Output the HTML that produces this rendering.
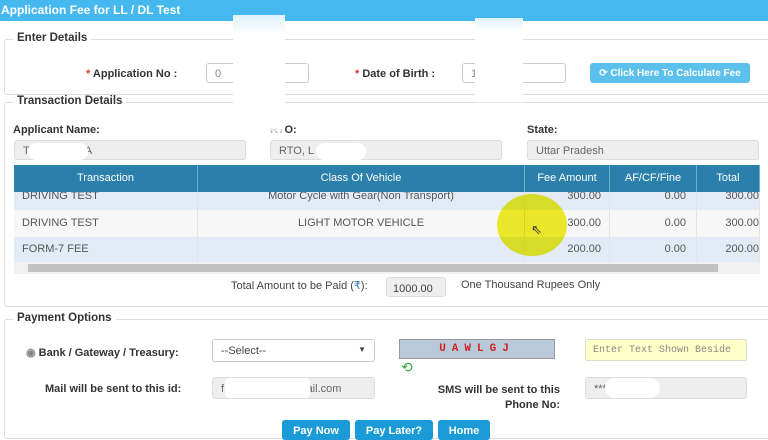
<!DOCTYPE html>
<html><head><meta charset="utf-8"><style>
*{margin:0;padding:0;box-sizing:border-box}
body{width:768px;height:432px;overflow:hidden;background:#fff;font-family:"Liberation Sans",sans-serif;font-size:11px;color:#333;position:relative}
.a{position:absolute}
.hdr{left:0;top:0;width:768px;height:21px;background:#45b8f0;color:#fff;font-weight:bold;font-size:12px;padding:3px 0 0 1px}
.fs{border:1px solid #ddd;border-radius:3px}
.lg{background:#fff;font-weight:bold;font-size:11.5px;color:#333;padding:0 4px}
.inp{border:1px solid #ccc;border-radius:3px;background:#fff;color:#888;padding:4px 8px}
.ro{background:#eee;border:1px solid #ddd;border-radius:3px;color:#666;padding:4px 8px}
.lb{font-weight:bold;font-size:11px}
.red{color:#d33}
.btn{background:#1a9ad6;color:#fff;font-weight:bold;font-size:11px;border-radius:3px;text-align:center;padding-top:5px}
.blur{background:#fff;border-radius:4px}
.row{position:absolute;left:14px;width:746px;overflow:hidden}
.c{position:absolute;top:0;height:100%;border-right:1px solid #e4e4e4;color:#555;font-size:11px;overflow:hidden;white-space:nowrap}
.h .c{color:#fff;border-right:1px solid #6fb0cf;text-align:center;line-height:27px}
.c1{left:0;width:184px;padding-left:8px}
.c2{left:184px;width:327px;text-align:center}
.c3{left:511px;width:85px;text-align:right;padding-right:8px}
.c4{left:596px;width:87px;text-align:right;padding-right:10px}
.c5{left:683px;width:63px;text-align:right;padding-right:0}
</style></head><body>
<div class="a hdr">Application Fee for LL / DL Test</div>

<div class="a fs" style="left:4px;top:39px;width:770px;height:56px"></div>
<div class="a lg" style="left:13px;top:32px">Enter Details</div>
<div class="a lb" style="left:86px;top:68px"><span class="red">*</span> Application No :</div>
<div class="a inp" style="left:206px;top:63px;width:103px;height:20px">0</div>
<div class="a lb" style="left:355px;top:68px"><span class="red">*</span> Date of Birth :</div>
<div class="a inp" style="left:462px;top:63px;width:104px;height:20px">1&nbsp;&nbsp;&nbsp;&nbsp;&nbsp;&nbsp;&nbsp;&nbsp;96.</div>
<div class="a btn" style="left:590px;top:63px;width:160px;height:20px;background:#5bc0eb;font-size:10px">⟳ Click Here To Calculate Fee</div>

<div class="a fs" style="left:4px;top:102px;width:770px;height:205px"></div>
<div class="a lg" style="left:13px;top:95px">Transaction Details</div>
<div class="a lb" style="left:13px;top:124px">Applicant Name:</div>
<div class="a ro" style="left:14px;top:140px;width:232px;height:20px">T/&nbsp;&nbsp;&nbsp;&nbsp;&nbsp;&nbsp;&nbsp;&nbsp;&nbsp;&nbsp;&nbsp;&nbsp;&nbsp;&nbsp;&nbsp;&nbsp;&nbsp;A</div>
<div class="a lb" style="left:270px;top:124px">RTO:</div>
<div class="a ro" style="left:270px;top:140px;width:232px;height:20px">RTO, L&nbsp;&nbsp;&nbsp;&nbsp;&nbsp;&nbsp;&nbsp;&nbsp;&nbsp;&nbsp;&nbsp;&nbsp;&nbsp;W</div>
<div class="a lb" style="left:527px;top:124px">State:</div>
<div class="a ro" style="left:527px;top:140px;width:232px;height:20px">Uttar Pradesh</div>

<div class="row" style="top:192px;height:18px;background:#e3ecf6;line-height:8px"><div class="c c1">DRIVING TEST</div><div class="c c2">Motor Cycle with Gear(Non Transport)</div><div class="c c3">300.00</div><div class="c c4">0.00</div><div class="c c5">300.00</div></div>
<div class="row" style="top:210px;height:27px;background:#f7f7f7;line-height:27px"><div class="c c1">DRIVING TEST</div><div class="c c2">LIGHT MOTOR VEHICLE</div><div class="c c3">300.00</div><div class="c c4">0.00</div><div class="c c5">300.00</div></div>
<div class="row" style="top:237px;height:25px;background:#e3ecf6;line-height:25px"><div class="c c1">FORM-7 FEE</div><div class="c c2"></div><div class="c c3">200.00</div><div class="c c4">0.00</div><div class="c c5">200.00</div></div>
<div class="a" style="left:497px;top:194px;width:70px;height:62px;border-radius:50%;background:#f2ee2a;mix-blend-mode:multiply"></div>
<div class="a" style="left:531px;top:222px;font-size:13px;color:#333">⇖</div>
<div class="row h" style="top:165px;height:27px;background:#2a7fab"><div class="c c1" style="padding:0">Transaction</div><div class="c c2">Class Of Vehicle</div><div class="c c3" style="padding:0">Fee Amount</div><div class="c c4" style="padding:0">AF/CF/Fine</div><div class="c c5">Total</div></div>
<div class="a" style="left:14px;top:262px;width:746px;height:12px;background:#f0f0f0"></div>
<div class="a" style="left:28px;top:264px;width:690px;height:8px;background:#c1c1c1"></div>

<div class="a" style="left:231px;top:279px;color:#444">Total Amount to be Paid (<span style="color:#27a">₹</span>):</div>
<div class="a ro" style="left:386px;top:277px;width:60px;height:20px;color:#444;padding:5px 6px">1000.00</div>
<div class="a" style="left:461px;top:279px;color:#444">One Thousand Rupees Only</div>

<div class="a fs" style="left:4px;top:319px;width:770px;height:120px"></div>
<div class="a lg" style="left:13px;top:312px">Payment Options</div>
<div class="a lb" style="left:26px;top:346px"><span style="color:#888">◉</span> Bank / Gateway / Treasury:</div>
<div class="a inp" style="left:212px;top:339px;width:163px;height:23px;color:#444;padding-top:5px">--Select--<span style="float:right;font-size:8px">▼</span></div>
<div class="a" style="left:399px;top:339px;width:156px;height:20px;background:#b9c9d9;border:1px solid #999;color:#c22;font-family:'Liberation Mono',monospace;font-weight:bold;text-align:center;letter-spacing:6px;padding-top:3px">UAWLGJ</div>
<div class="a" style="left:401px;top:359px;color:#3a3;font-size:14px">⟲</div>
<div class="a" style="left:585px;top:339px;width:162px;height:22px;background:#ffffc8;border:1px solid #ddc;color:#888;font-family:'Liberation Mono',monospace;font-size:10px;padding:5px 7px;border-radius:2px">Enter Text Shown Beside</div>
<div class="a lb" style="left:45px;top:383px">Mail will be sent to this id:</div>
<div class="a ro" style="left:212px;top:377px;width:163px;height:22px;padding-top:5px">f&nbsp;&nbsp;&nbsp;&nbsp;&nbsp;&nbsp;&nbsp;&nbsp;&nbsp;&nbsp;&nbsp;&nbsp;&nbsp;&nbsp;&nbsp;&nbsp;&nbsp;&nbsp;&nbsp;&nbsp;&nbsp;&nbsp;&nbsp;&nbsp;mail.com</div>
<div class="a lb" style="left:420px;top:383px;width:140px;text-align:right;line-height:15px">SMS will be sent to this Phone No:</div>
<div class="a ro" style="left:585px;top:377px;width:162px;height:22px;padding-top:5px">***</div>
<div class="a blur" style="left:225px;top:378px;width:85px;height:20px"></div>
<div class="a blur" style="left:605px;top:378px;width:55px;height:20px;border-radius:10px"></div>
<div class="a blur" style="left:28px;top:143px;width:60px;height:17px;border-radius:8px"></div>
<div class="a blur" style="left:316px;top:143px;width:50px;height:17px;border-radius:8px"></div>

<div class="a btn" style="left:282px;top:420px;width:68px;height:20px">Pay Now</div>
<div class="a btn" style="left:355px;top:420px;width:78px;height:20px">Pay Later?</div>
<div class="a btn" style="left:438px;top:420px;width:52px;height:20px">Home</div>

<div class="a" style="left:233px;top:15px;width:52px;height:125px;background:linear-gradient(#dff2fc,#fff 15%,#fff 90%,rgba(255,255,255,0))"></div>
<div class="a" style="left:475px;top:18px;width:48px;height:88px;background:linear-gradient(#dff2fc,#fff 15%,#fff 90%,rgba(255,255,255,0))"></div>
</body></html>
